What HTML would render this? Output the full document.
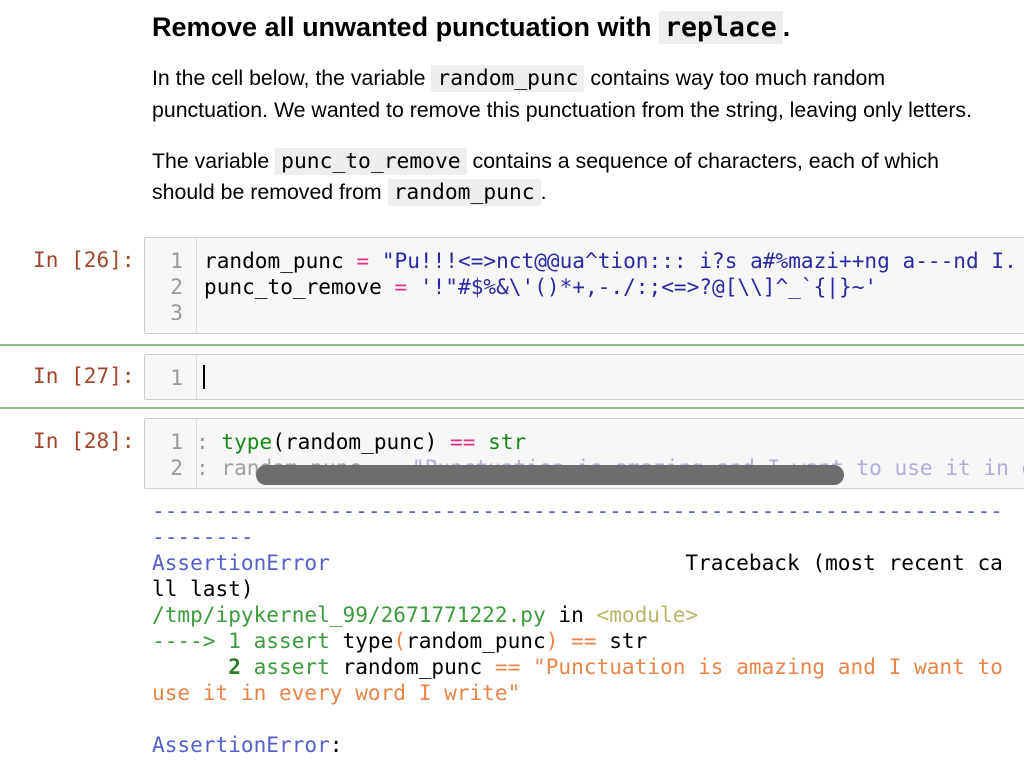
<!DOCTYPE html>
<html><head><meta charset="utf-8"><style>
body{margin:0;width:1024px;height:763px;overflow:hidden;background:#fff;position:relative;font-family:"Liberation Sans",Arial,sans-serif;color:#000}
.t{position:absolute;white-space:pre;font-size:21.3px;left:152px}
code{font-family:"DejaVu Sans Mono","Liberation Mono",monospace;font-size:21.3px;background:#eee;padding:1px 6px;border-radius:2px}
.p{position:absolute;left:33px;font-family:"DejaVu Sans Mono",monospace;font-size:21.1px;color:#a0452d;white-space:pre}
.box{position:absolute;left:144px;width:900px;background:#f7f7f7;border:1px solid #cfcfcf;border-radius:2px;overflow:hidden}
.gut{position:absolute;left:0;top:0;bottom:0;width:51px;border-right:1px solid #ddd;background:#f7f7f7}
.ln{position:absolute;left:0;width:38px;text-align:right;color:#999;font-family:"DejaVu Sans Mono",monospace;font-size:21.1px;white-space:pre}
.c{position:absolute;left:59px;font-family:"DejaVu Sans Mono",monospace;font-size:21.1px;white-space:pre;color:#000}
.s{color:#2a2aa0}.o{color:#e0308a}.k{color:#198a19}
.g{position:absolute;left:0;width:1024px;height:2px;background:#8fc08f}
.out{position:absolute;left:152px;font-family:"DejaVu Sans Mono",monospace;font-size:21.1px;white-space:pre;line-height:26px}
.b{color:#5560c9}.gr{color:#3e9a3e}.or{color:#e8854a}.ye{color:#b9b86a}
</style></head><body>
<div class="t" style="top:12px;font-size:27px;font-weight:bold">Remove all unwanted punctuation with <code style="font-size:26.5px;font-weight:bold">replace</code>.</div>
<div class="t" style="top:66px">In the cell below, the variable <code>random_punc</code> contains way too much random</div>
<div class="t" style="top:98px">punctuation. We wanted to remove this punctuation from the string, leaving only letters.</div>
<div class="t" style="top:149px">The variable <code>punc_to_remove</code> contains a sequence of characters, each of which</div>
<div class="t" style="top:180px">should be removed from <code>random_punc</code>.</div>

<div class="p" style="top:247px">In [26]:</div>
<div class="box" style="top:237px;height:95px">
<div class="gut"></div>
<div class="ln" style="top:10px">1</div><div class="ln" style="top:36px">2</div><div class="ln" style="top:62px">3</div>
<div class="c" style="top:10px">random_punc <span class="o">=</span> <span class="s">"Pu!!!&lt;=&gt;nct@@ua^tion::: i?s a#%mazi++ng a---nd I.</span></div>
<div class="c" style="top:36px">punc_to_remove <span class="o">=</span> <span class="s">'!"#$%&amp;\'()*+,-./:;&lt;=&gt;?@[\\]^_`{|}~'</span></div>
</div>
<div class="g" style="top:344px"></div>
<div class="p" style="top:363px">In [27]:</div>
<div class="box" style="top:354px;height:44px">
<div class="gut"></div>
<div class="ln" style="top:10px">1</div>
<div style="position:absolute;left:58px;top:10px;width:2px;height:24px;background:#000"></div>
</div>
<div class="g" style="top:407px"></div>
<div class="p" style="top:428px">In [28]:</div>
<div class="box" style="top:418px;height:69px">
<div class="gut"></div>
<div class="ln" style="top:10px">1</div><div class="ln" style="top:36px">2</div>
<div class="c" style="top:10px;left:51px"><span style="color:#999">:</span> <span class="k">type</span>(random_punc) <span class="o">==</span> <span class="k">str</span></div>
<div class="c" style="top:36px;left:51px;opacity:.35"><span>: </span>random_punc <span class="o">==</span> <span class="s">"Punctuation is amazing and I want to use it in e</span></div>
<div style="position:absolute;left:111px;top:46px;width:588px;height:20px;background:#6e6e6e;border-radius:10px"></div>
</div>

<div class="out" style="top:498px"><span class="b">-------------------------------------------------------------------
--------</span>
<span class="b">AssertionError</span>                            Traceback (most recent ca
ll last)
<span class="gr">/tmp/ipykernel_99/2671771222.py</span> in <span class="ye">&lt;module&gt;</span>
<span class="gr">----&gt; 1</span> <span class="gr">assert</span> type<span class="or">(</span>random_punc<span class="or">)</span> <span class="or">==</span> str
      <b style="color:#2a7a2a">2</b> <span class="gr">assert</span> random_punc <span class="or">==</span> <span class="or">"Punctuation is amazing and I want to
use it in every word I write"</span>

<span class="b">AssertionError</span>:</div>
</body></html>
